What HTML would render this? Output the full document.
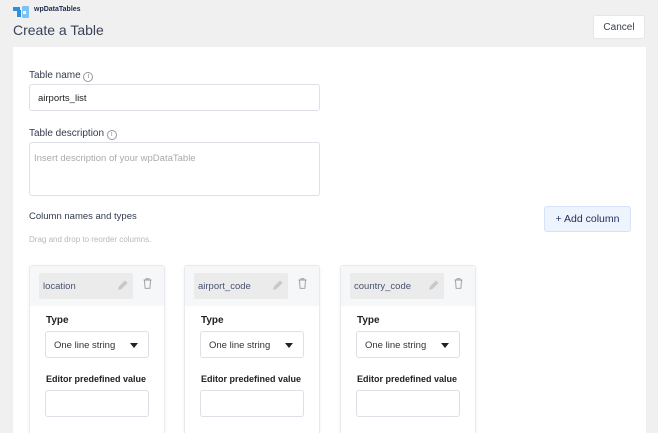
<!DOCTYPE html>
<html><head><style>
*{box-sizing:border-box;margin:0;padding:0}
html,body{width:658px;height:433px;overflow:hidden}
body{background:#f0f0f1;font-family:"Liberation Sans",sans-serif;position:relative;color:#2b2f3e}
.a{position:absolute}
.lbl{font-size:10px;color:#333a4d}
.inp{border:1px solid #dcdfe6;background:#fff;border-radius:3px}
.card{position:absolute;top:265px;width:136px;height:168px;background:#fff;border:1px solid #e8eaee;border-bottom:none;border-radius:3px 3px 0 0;box-shadow:0 1px 3px rgba(0,0,0,.06)}
.hd{position:absolute;left:0;top:0;width:134px;height:40px;background:#f6f7f9}
.nm{position:absolute;left:9px;top:7px;width:94px;height:26px;background:#ebebeb;border-radius:2px;font-size:9.5px;color:#4a5270;padding:8px 0 0 4px}
.pen{position:absolute;left:87px;top:13px}
.tr{position:absolute;left:113px;top:12px}
.ty{position:absolute;left:16px;top:49px;font-size:10px;font-weight:bold;color:#222}
.sel{position:absolute;left:15px;top:65px;width:104px;height:27px;font-size:9.5px;color:#333;padding:8px 0 0 8px}
.sel:after{content:"";position:absolute;right:10px;top:11px;border:4px solid transparent;border-top:5px solid #222}
.ed{position:absolute;left:16px;top:108px;font-size:9px;font-weight:bold;color:#222}
.ein{position:absolute;left:15px;top:124px;width:104px;height:27px}
</style></head><body>
<svg class="a" style="left:13px;top:6px" width="16" height="12" viewBox="0 0 16 12"><rect x="0" y="1" width="7" height="4" fill="#2d8fe0"/><rect x="4" y="4" width="4" height="7" fill="#2d8fe0"/><rect x="9" y="0" width="7" height="12" rx="1" fill="#7cc3f5"/><rect x="10" y="5" width="3" height="3" fill="#fff"/></svg>
<div class="a" style="left:34px;top:6px;font-size:7px;font-weight:bold;color:#1e2b4a">wpDataTables</div>
<div class="a" style="left:13px;top:22px;font-size:14px;color:#3a4258">Create a Table</div>
<div class="a inp" style="left:593px;top:15px;width:52px;height:24px;border-color:#e6e6e6;font-size:10px;color:#3a4258;text-align:center;padding-top:6px">Cancel</div>
<div class="a" style="left:13px;top:47px;width:633px;height:386px;background:#fff"></div>
<div class="a lbl" style="left:29px;top:70px">Table name <span style="display:inline-block;width:10px;height:10px;border:1px solid #999;border-radius:50%;font-size:7px;text-align:center;line-height:8px;color:#888">i</span></div>
<div class="a inp" style="left:29px;top:84px;width:291px;height:27px;font-size:9.5px;color:#222;padding:8px 0 0 8px">airports_list</div>
<div class="a lbl" style="left:29px;top:128px">Table description <span style="display:inline-block;width:10px;height:10px;border:1px solid #999;border-radius:50%;font-size:7px;text-align:center;line-height:8px;color:#888">i</span></div>
<div class="a inp" style="left:29px;top:142px;width:291px;height:54px;font-size:9.5px;color:#aaa;padding:10px 0 0 4px">Insert description of your wpDataTable</div>
<div class="a lbl" style="left:29px;top:211px;font-size:9.5px">Column names and types</div>
<div class="a" style="left:29px;top:235px;font-size:8px;color:#b5b8c0">Drag and drop to reorder columns.</div>
<div class="a" style="left:544px;top:206px;width:87px;height:26px;background:#eef4fe;border:1px solid #d5e2f7;border-radius:3px;font-size:10.5px;color:#1f2d5a;text-align:center;padding-top:6px">+ Add column</div>
<div class="card" style="left:29px"><div class="hd"></div><div class="nm">location</div>
<svg class="pen" width="12" height="12" viewBox="0 0 12 12"><path d="M1 11l1-3.5 6-6 2.5 2.5-6 6z" fill="#c8c8c8"/></svg>
<svg class="tr" width="9" height="11" viewBox="0 0 9 11"><path d="M0.5 2h8M3 2V.7h3V2M1.5 2l.6 8.3h4.8L7.5 2" fill="none" stroke="#999" stroke-width="0.9"/></svg>
<div class="ty">Type</div><div class="sel inp">One line string</div><div class="ed">Editor predefined value</div><div class="ein inp"></div></div>
<div class="card" style="left:184px"><div class="hd"></div><div class="nm">airport_code</div>
<svg class="pen" width="12" height="12" viewBox="0 0 12 12"><path d="M1 11l1-3.5 6-6 2.5 2.5-6 6z" fill="#c8c8c8"/></svg>
<svg class="tr" width="9" height="11" viewBox="0 0 9 11"><path d="M0.5 2h8M3 2V.7h3V2M1.5 2l.6 8.3h4.8L7.5 2" fill="none" stroke="#999" stroke-width="0.9"/></svg>
<div class="ty">Type</div><div class="sel inp">One line string</div><div class="ed">Editor predefined value</div><div class="ein inp"></div></div>
<div class="card" style="left:340px"><div class="hd"></div><div class="nm">country_code</div>
<svg class="pen" width="12" height="12" viewBox="0 0 12 12"><path d="M1 11l1-3.5 6-6 2.5 2.5-6 6z" fill="#c8c8c8"/></svg>
<svg class="tr" width="9" height="11" viewBox="0 0 9 11"><path d="M0.5 2h8M3 2V.7h3V2M1.5 2l.6 8.3h4.8L7.5 2" fill="none" stroke="#999" stroke-width="0.9"/></svg>
<div class="ty">Type</div><div class="sel inp">One line string</div><div class="ed">Editor predefined value</div><div class="ein inp"></div></div>
</body></html>
